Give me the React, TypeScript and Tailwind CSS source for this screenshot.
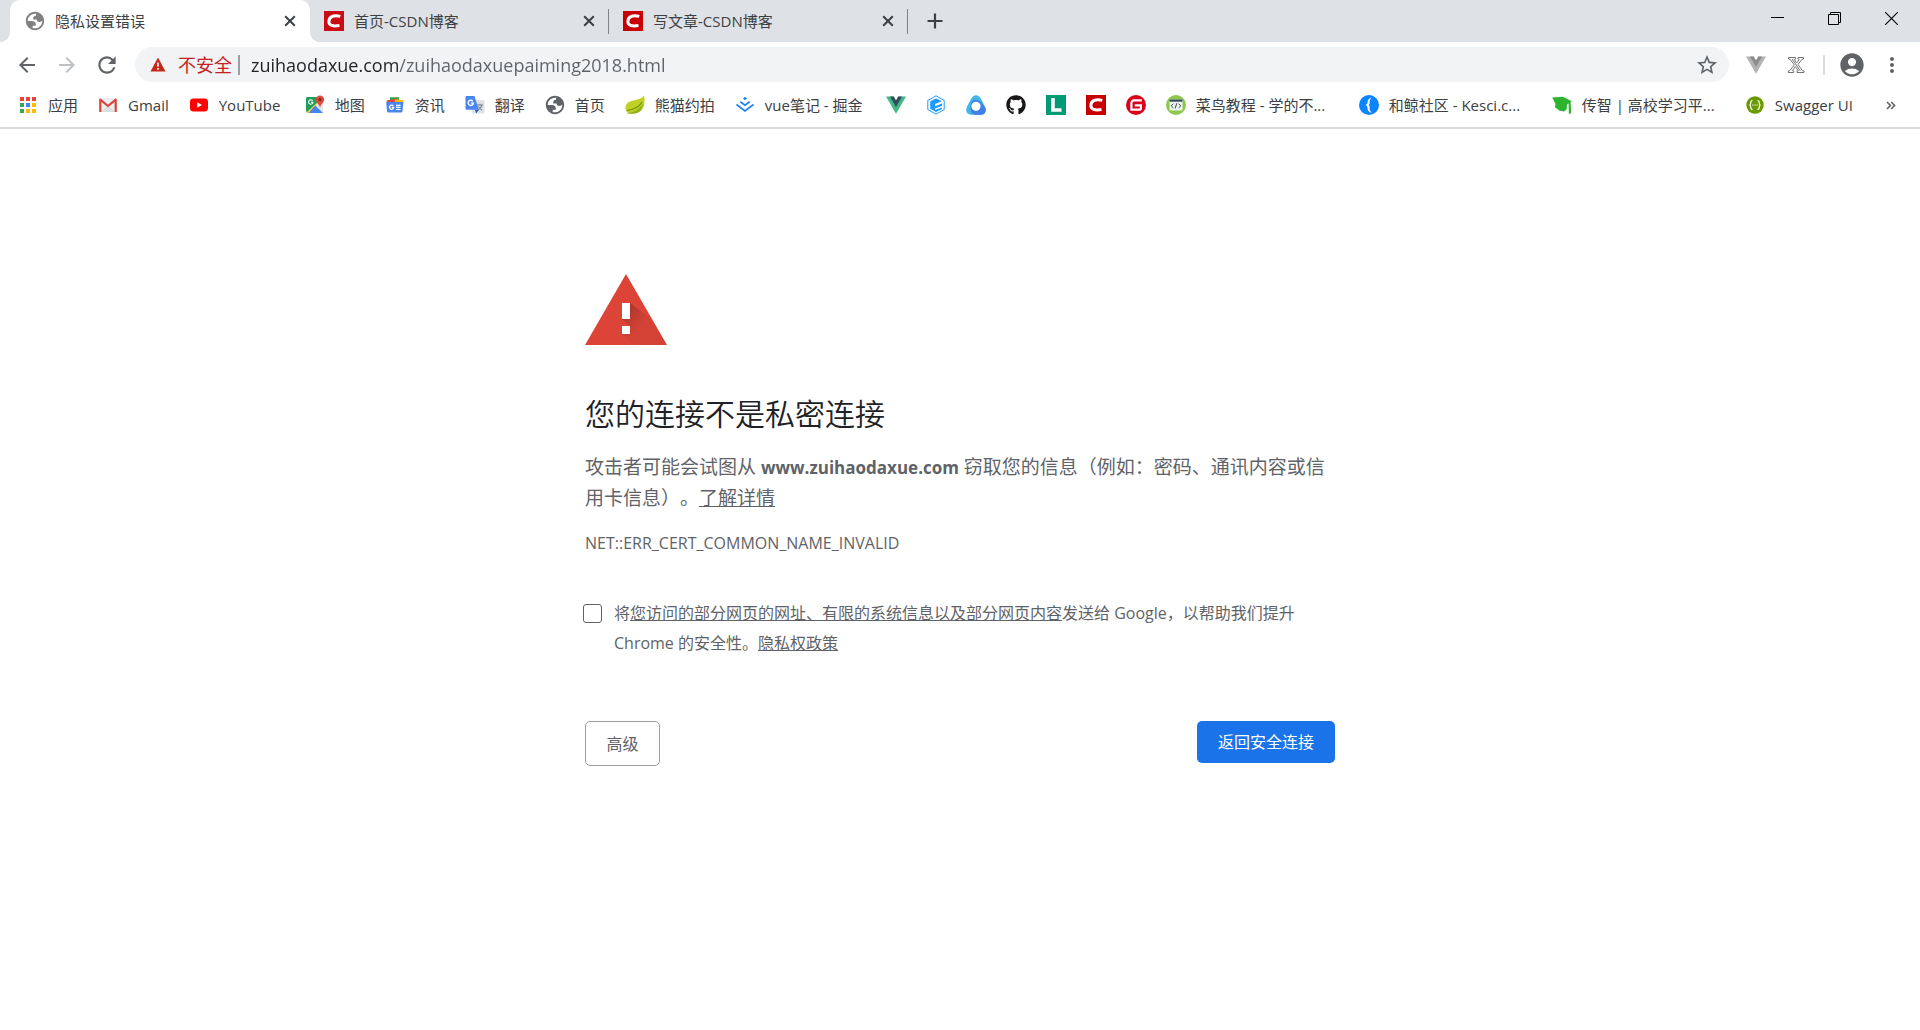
import type { ReactNode } from "react";
import { FaGithub } from "react-icons/fa";
import {
  MdAccountCircle,
  MdArrowBack,
  MdArrowForward,
  MdMoreVert,
  MdRefresh,
  MdStarBorder,
} from "react-icons/md";

const svgProps = { width: 20, height: 20, viewBox: "0 0 20 20", "aria-hidden": true } as const;

function GlobeIcon({ className }: { className: string }) {
  return (
    <svg viewBox="0 0 24 24" fill="currentColor" fillRule="evenodd" aria-hidden className={className}>
      <path d="M12 2C6.480 2 2 6.480 2 12s4.480 10 10 10 10-4.480 10-10S17.520 2 12 2zM4 12h4.400c3.407.022 4.922 1.730 4.543 5.127H9.488v2.470a8.004 8.004 0 0 0 10.498-8.083C19.327 12.504 18.332 13 17 13c-2.137 0-3.206-.916-3.206-2.750h-3.748c-.274-2.728.683-4.092 2.870-4.092 0-.975.327-1.597.811-1.970A8 8 0 0 0 4 12z" />
    </svg>
  );
}

function CsdnIcon({ fill }: { fill: string }) {
  return (
    <svg {...svgProps}>
      <rect width="20" height="20" fill={fill} />
      <path d="M16.3 5.400C10.500 3.900 5.400 5 4.900 10c-.4 4.600 4 5.600 10.600 4.600" fill="none" stroke="#fff" strokeWidth="3" />
    </svg>
  );
}

function AppsIcon() {
  const colors = ["#ea4335", "#ea4335", "#ea4335", "#34a853", "#4285f4", "#fbbc05", "#34a853", "#fbbc05", "#fbbc05"];
  return (
    <svg {...svgProps}>
      {colors.map((c, i) => (
        <rect key={i} x={2 + (i % 3) * 6} y={2 + Math.floor(i / 3) * 6} width="4" height="4" fill={c} />
      ))}
    </svg>
  );
}

function GmailIcon() {
  return (
    <svg {...svgProps}>
      <rect x="1" y="3" width="18" height="14" rx="1.200" fill="#eceff1" />
      <path d="M3 17 10 10.500 17 17z" fill="#dcdfe1" />
      <path d="M2.300 17V4.600L10 11l7.700-6.400V17" fill="none" stroke="#d9453a" strokeWidth="2.200" strokeLinejoin="round" />
    </svg>
  );
}

function YouTubeIcon() {
  return (
    <svg {...svgProps}>
      <rect x="1" y="3.500" width="18" height="13" rx="3.400" fill="#f00" />
      <path d="M8.200 7.200v5.600l4.900-2.800z" fill="#fff" />
    </svg>
  );
}

function MapsIcon() {
  return (
    <svg {...svgProps}>
      <rect x="1" y="2" width="17" height="16" rx="1.500" fill="#e8eaed" />
      <path d="M1 3.500C1 2.700 1.700 2 2.500 2H12v7L2.400 17.600 1 16z" fill="#1e9e58" />
      <path d="M1.600 17.300 17 3l1 1.400L3.600 18H2.200z" fill="#fdc935" />
      <path d="M10.200 10.500 18 18H3.600z" fill="#4285f4" />
      <path d="m10.800 9.800 7.200 6.900v-9L14 6.800z" fill="#e4e6e8" />
      <path d="M7.600 5.700a2.200 2.200 0 1 0 .4 1.500H6" fill="none" stroke="#fff" strokeWidth="1.100" />
      <path d="M15 .4a4.200 4.200 0 0 0-4.200 4.200c0 3.100 3.100 4 4.200 8.200 1.100-4.200 4.200-5.100 4.200-8.200A4.200 4.200 0 0 0 15 .4" fill="#e14a3b" />
      <circle cx="15" cy="4.600" r="1.500" fill="#7b231c" />
    </svg>
  );
}

function NewsIcon() {
  return (
    <svg {...svgProps}>
      <path d="M5 2.200h9v6H5z" fill="#2fa84f" />
      <path d="m1.500 5.500 11-2 1 5-11 2z" fill="#ea4335" />
      <path d="M10 4.500 18.500 5l-.6 6H10z" fill="#fbbc04" />
      <path d="M1.200 7h17.200l-.9 9.200a1.500 1.500 0 0 1-1.500 1.300H3.500A1.500 1.500 0 0 1 2 16.200z" fill="#4a86f0" />
      <path d="M8.300 10.900a2.100 2.100 0 1 0 .4 1.600H6.900" fill="none" stroke="#fff" strokeWidth="1.300" />
      <path d="M11 10.300h4.500M11 12.400h4.500M11 14.500h4.500" stroke="#fff" strokeWidth="1.200" />
    </svg>
  );
}

function TranslateIcon() {
  return (
    <svg {...svgProps}>
      <rect x="7" y="5" width="12.500" height="13.500" rx="1.200" fill="#dfe1e4" />
      <path d="M12 10h6M15 8.800V10M17 10c-.8 2.500-2.600 4.300-4 5.200M13.500 11.500c.8 1.600 2 2.700 3.500 3.600" fill="none" stroke="#73848e" strokeWidth="1.100" />
      <path d="M1.700 1H9.500l4.300 13.800H1.700A1.200 1.200 0 0 1 .5 13.600V2.200A1.200 1.200 0 0 1 1.700 1z" fill="#4a86f0" />
      <path d="M10 14.800h3.800L11.200 18.500z" fill="#2b59b8" />
      <path d="M7.800 6.300a2.600 2.600 0 1 0 .5 1.900H5.900" fill="none" stroke="#fff" strokeWidth="1.300" />
    </svg>
  );
}

function LeafIcon() {
  return (
    <svg {...svgProps}>
      <path d="M19 .6c1 5.400.9 11.400-2.700 14.900-3.600 3.400-9.300 3.200-13.300 2.200C.5 15.900-.3 12.300 1.500 9 5 4.200 14.500 6.600 19 .6z" fill="#c0d024" />
      <path d="M1.600 18.300c7-.7 13.200-3.500 16.100-9.700-.1 5.700-3.200 10-9.700 10.200-2.600.1-4.900-.1-6.400-.5z" fill="#8fb01a" />
      <path d="M1.800 15.500c6.700-.6 11.800-2.900 15.300-8.500" fill="none" stroke="#6d9311" strokeWidth="1.200" />
    </svg>
  );
}

function JuejinIcon() {
  return (
    <svg {...svgProps} fill="none" stroke="#1e80ff" strokeWidth="1.700">
      <path d="m10 1.800 2 1.700-2 1.700-2-1.700z" fill="#1e80ff" stroke="none" />
      <path d="M5.300 6.800 10 10.300l4.700-3.500M1.500 9.500 10 15.900l8.500-6.400" />
    </svg>
  );
}

function VueIcon({ outer, inner }: { outer: string; inner: string }) {
  return (
    <svg {...svgProps}>
      <path d="M0 1.500h7.500L10 5.800l2.500-4.300H20L10 18.800z" fill={outer} />
      <path d="M4 1.500h3.700L10 5.500l2.300-4H16L10 12z" fill={inner} />
    </svg>
  );
}

function HexIcon() {
  return (
    <svg {...svgProps}>
      <path d="M10 .8 18.200 5.400v9.200L10 19.200 1.800 14.600V5.400z" fill="none" stroke="#1e9bff" />
      <path d="M10 3.200 15.800 6.200 9 9v2.200l7-2.700v2.200l-7 2.700V15l7-2.400v1.300L10 17l-5.800-3.200V6.400z" fill="#1e9bff" />
    </svg>
  );
}

function TriangleLogoIcon() {
  return (
    <svg {...svgProps}>
      <path d="M10 .3c2.500 0 4 1.700 5.300 4.200l3.700 7.200c2 4.300.2 8.100-3.800 8.100H4.800c-4 0-5.800-3.800-3.800-8.100l3.700-7.200C6 2 7.500.3 10 .3z" fill="#41b5e8" />
      <path d="M8 5c4.500-1 8.500 3.600 11.400 8 .9 3.900-.7 6.800-4.200 6.800H9C3.500 19 2.600 8 8 5z" fill="#3f7fe6" />
      <circle cx="10" cy="11.300" r="4.600" fill="#fff" />
    </svg>
  );
}

function GreenLIcon() {
  return (
    <svg {...svgProps}>
      <rect width="20" height="20" fill="#009a77" />
      <path d="M7 3v12h8.500" fill="none" stroke="#fff" strokeWidth="3.600" />
    </svg>
  );
}

function GiteeIcon() {
  return (
    <svg {...svgProps}>
      <circle cx="10" cy="10" r="10" fill="#d9001b" />
      <path d="M15.800 5.400H8A2.600 2.600 0 0 0 5.400 8v6.600h7.800a1.700 1.700 0 0 0 1.700-1.700v-2.500H8.700" fill="none" stroke="#fff" strokeWidth="2.200" />
    </svg>
  );
}

function RunoobIcon() {
  return (
    <svg {...svgProps}>
      <circle cx="10" cy="10" r="10" fill="#8cc84b" />
      <rect x="3.500" y="4.500" width="13" height="11" rx=".8" fill="#eef3ee" />
      <path d="M3.500 4.500h13v2.200h-13z" fill="#34495e" />
      <path d="M7.300 8.700 5.200 10.800l2.100 2.100M12.700 8.700l2.100 2.100-2.100 2.100M10.800 8.200l-1.600 5.200" fill="none" stroke="#34495e" strokeWidth="1" />
    </svg>
  );
}

function KesciIcon() {
  return (
    <svg {...svgProps}>
      <circle cx="10" cy="10" r="10" fill="#0a84ff" />
      <path d="M12.800 2.500C9 3.500 8.700 6 8.500 7.800 8.300 9 7.600 9.600 6.600 10c1 .5 1.700 1.200 1.800 2.400.2 2.200.6 4.400 4.400 5.400-2.200-2-2.300-3.600-2.200-5.200.1-1.200-.2-2-.9-2.600.8-.7 1.100-1.500 1-2.700-.1-1.600.1-3 2.100-4.800z" fill="#fff" />
    </svg>
  );
}

function GraduationIcon() {
  return (
    <svg {...svgProps}>
      <path d="M.2 2.600 11 1.800l8.800 4.500-1.200.8.200 3.400.4 7.700-2.300.8-.3-8.400.1-2-1.700.6-.3 5-2.600 2.300-4.500-.8-4.600-3.500.4-3.500z" fill="#2db52d" />
    </svg>
  );
}

function SwaggerIcon() {
  return (
    <svg {...svgProps}>
      <circle cx="10" cy="10" r="8.700" fill="#6b9a00" />
      <path d="M7.500 5.500c-3 0-.6 4-3 4.500 2.400.5 0 4.500 3 4.500M12.500 5.500c3 0 .6 4 3 4.500-2.400.5 0 4.500-3 4.500" fill="none" stroke="#fff" strokeWidth="1.200" />
      <path d="M7.200 9.400h1.200v1.200H7.200zM9.400 9.400h1.200v1.200H9.400zM11.600 9.400h1.200v1.200h-1.200z" fill="#fff" />
    </svg>
  );
}

function CloseIcon() {
  return (
    <svg width="12" height="12" viewBox="0 0 12 12" aria-hidden>
      <path d="M1.200 1.200 10.800 10.800M10.800 1.200 1.200 10.800" stroke="currentColor" strokeWidth="2" />
    </svg>
  );
}

function Tab({ icon, title, active, divider }: { icon: ReactNode; title: string; active?: boolean; divider?: boolean }) {
  return (
    <div
      className={
        active
          ? "relative flex h-full w-[300px] min-w-0 items-center rounded-t-[10px] bg-white pr-3 pl-[15px] before:absolute before:bottom-0 before:-left-2.5 before:size-2.5 before:bg-[radial-gradient(circle_at_0_0,transparent_10px,#fff_10px)] after:absolute after:-right-2.5 after:bottom-0 after:size-2.5 after:bg-[radial-gradient(circle_at_100%_0,transparent_10px,#fff_10px)]"
          : "relative flex h-full w-[299px] min-w-0 items-center pr-3 pl-3.5"
      }
    >
      <button role="tab" aria-selected={!!active} className="flex min-w-0 flex-1 items-center gap-2.5 text-left">
        <span className="flex size-5 shrink-0 items-center justify-center">{icon}</span>
        <span className="truncate">{title}</span>
      </button>
      <button aria-label={`关闭 ${title}`} className="flex size-4 items-center justify-center text-[#3c4043]">
        <CloseIcon />
      </button>
      {divider && <span className="absolute right-0 h-[25px] w-px bg-[#808388]" />}
    </div>
  );
}

type Bookmark = { icon: ReactNode; label: string; text?: string; width?: string };

const bookmarks: Bookmark[] = [
  { icon: <AppsIcon />, label: "应用", text: "应用" },
  { icon: <GmailIcon />, label: "Gmail", text: "Gmail" },
  { icon: <YouTubeIcon />, label: "YouTube", text: "YouTube", width: "min-w-[66px]" },
  { icon: <MapsIcon />, label: "地图", text: "地图" },
  { icon: <NewsIcon />, label: "资讯", text: "资讯" },
  { icon: <TranslateIcon />, label: "翻译", text: "翻译" },
  { icon: <GlobeIcon className="size-[22px] shrink-0 text-[#5f6368]" />, label: "首页", text: "首页" },
  { icon: <LeafIcon />, label: "熊猫约拍", text: "熊猫约拍" },
  { icon: <JuejinIcon />, label: "vue笔记 - 掘金", text: "vue笔记 - 掘金", width: "min-w-[101px]" },
  { icon: <VueIcon outer="#41b883" inner="#35495e" />, label: "Vue" },
  { icon: <HexIcon />, label: "Element" },
  { icon: <TriangleLogoIcon />, label: "Ant" },
  { icon: <FaGithub className="size-5 text-[#191717]" />, label: "GitHub" },
  { icon: <GreenLIcon />, label: "L" },
  { icon: <CsdnIcon fill="#c80000" />, label: "CSDN" },
  { icon: <GiteeIcon />, label: "Gitee" },
  { icon: <RunoobIcon />, label: "菜鸟教程", text: "菜鸟教程 - 学的不...", width: "w-[143px]" },
  { icon: <KesciIcon />, label: "和鲸社区", text: "和鲸社区 - Kesci.c...", width: "w-[143px]" },
  { icon: <GraduationIcon />, label: "传智", text: "传智 | 高校学习平...", width: "w-[143px]" },
  { icon: <SwaggerIcon />, label: "Swagger UI", text: "Swagger UI" },
];

function WarningTriangle() {
  return (
    <svg width="82" height="71" viewBox="0 0 82 71" aria-hidden>
      <defs>
        <linearGradient id="shade" gradientUnits="userSpaceOnUse" x1="38" y1="40" x2="60" y2="60">
          <stop offset="0" stopColor="#000" stopOpacity=".2" />
          <stop offset=".7" stopColor="#000" stopOpacity=".03" />
        </linearGradient>
      </defs>
      <path d="M41 0 82 71H0z" fill="#db4437" />
      <path d="M45 29 67.500 45.900 82 71H48L37 60l8-8-8-7z" fill="url(#shade)" />
      <path d="M37 29h8v16h-8zM37 52h8v8h-8z" fill="#fff" />
    </svg>
  );
}

export default function App() {
  return (
    <div className="flex min-h-screen flex-col bg-white font-['Open_Sans','Noto_Sans_CJK_SC',sans-serif] text-[15px] text-[#3c4043] [text-spacing-trim:space-all]">
      <header>
        <div className="flex h-[42px] bg-[#dee1e6] pl-2.5">
          <div role="tablist" className="flex min-w-0">
            <Tab active icon={<GlobeIcon className="size-[22px] shrink-0 text-[#808080]" />} title="隐私设置错误" />
            <Tab divider icon={<CsdnIcon fill="#ca0c16" />} title="首页-CSDN博客" />
            <Tab divider icon={<CsdnIcon fill="#c80000" />} title="写文章-CSDN博客" />
          </div>
          <button aria-label="新标签页" className="flex w-[54px] items-center justify-center">
            <svg width="16" height="16" viewBox="0 0 16 16" aria-hidden>
              <path d="M8 .5v15M.5 8h15" stroke="#3c4043" strokeWidth="2.200" />
            </svg>
          </button>
          <div className="ml-auto flex h-9 text-black">
            <button aria-label="最小化" className="flex w-[57px] items-center justify-center">
              <svg width="13" height="13" viewBox="0 0 13 13" aria-hidden>
                <path d="M0 5.500h13" stroke="currentColor" />
              </svg>
            </button>
            <button aria-label="还原" className="flex w-[57px] items-center justify-center">
              <svg width="13" height="13" viewBox="0 0 13 13" aria-hidden fill="none" stroke="currentColor">
                <path d="M.5 2.500h10v10H.5zM2.500 2.500v-2h10v10h-2" />
              </svg>
            </button>
            <button aria-label="关闭" className="flex w-[57px] items-center justify-center">
              <svg width="13" height="13" viewBox="0 0 13 13" aria-hidden>
                <path d="m0 0 13 13M13 0 0 13" stroke="currentColor" strokeWidth="1.100" />
              </svg>
            </button>
          </div>
        </div>

        <div className="flex h-[45px] items-center pr-2 pl-[7px] text-[#5f6368]">
          <button aria-label="后退" className="flex w-10 justify-center">
            <MdArrowBack className="size-6" />
          </button>
          <button aria-label="前进" className="flex w-10 justify-center text-[#bdc1c6]">
            <MdArrowForward className="size-6" />
          </button>
          <button aria-label="重新加载" className="flex w-10 justify-center">
            <MdRefresh className="size-[26px]" />
          </button>
          <div className="mr-[7px] ml-2 flex h-[35px] min-w-0 flex-1 items-center rounded-full bg-[#f1f3f4] pr-2.5 pl-[15px] text-lg">
            <button className="flex shrink-0 items-center gap-3 text-[#c5221f]">
              <svg width="16" height="15" viewBox="0 0 16 15" aria-hidden>
                <path d="M8 .5 15.500 14.500H.5z" fill="#c5281c" />
                <path d="M8 5.500v4M8 11v1.700" stroke="#f1f3f4" strokeWidth="1.700" />
              </svg>
              <span>不安全</span>
            </button>
            <span className="mr-[11px] ml-1.5 h-5 w-0.5 shrink-0 bg-[#9aa0a6]" />
            <input
              aria-label="地址栏"
              defaultValue="zuihaodaxue.com/zuihaodaxuepaiming2018.html"
              className="h-full min-w-0 flex-1 bg-[linear-gradient(to_right,#202124_147px,#5f6368_147px)] bg-clip-text text-transparent outline-none"
            />
            <button aria-label="将此标签页加入书签">
              <MdStarBorder className="size-6" />
            </button>
          </div>
          <button aria-label="Vue devtools" className="flex w-10 justify-center">
            <VueIcon outer="#b3b3b3" inner="#8c8c8c" />
          </button>
          <button aria-label="XPath Helper" className="flex w-10 justify-center">
            <svg width="18" height="18" viewBox="0 0 18 18" fill="none" stroke="#757575" aria-hidden>
              <path d="M1.500 1.500h7v1.500l-1.300.3L9.700 7l2.500-3.500-1.200-.5V1.500h5.500V3l-1.600.4-3.900 5.100 4.500 6.300 1.500.2v1.500h-7V15l1.300-.3-3-4.100-2.900 4 1.300.4v1.500h-5.500V15l1.700-.4 4.400-5.700L3.100 3.300 1.500 3zM5.200 3l8 11.800" />
            </svg>
          </button>
          <span className="mx-[7px] h-5 w-0.5 bg-[#dadce0]" />
          <button aria-label="用户" className="flex w-10 justify-center">
            <MdAccountCircle className="size-7" />
          </button>
          <button aria-label="菜单" className="flex w-10 justify-center">
            <MdMoreVert className="size-6" />
          </button>
        </div>

        <nav aria-label="书签" className="flex h-[42px] items-center gap-5 overflow-hidden border-b-2 border-[#dadce0] pr-6 pb-1 pl-[18px]">
          {bookmarks.map((b) => (
            <a key={b.label} href="#" aria-label={b.label} className="flex shrink-0 items-center gap-2.5 whitespace-nowrap">
              <span className="flex size-5 items-center justify-center">{b.icon}</span>
              {b.text && <span className={b.width}>{b.text}</span>}
            </a>
          ))}
          <button aria-label="更多书签" className="ml-auto text-[#5f6368]">
            <svg width="10" height="9" viewBox="0 0 10 9" fill="none" stroke="currentColor" strokeWidth="1.600" aria-hidden>
              <path d="m1 1 3.400 3.500L1 8M5.200 1l3.400 3.500L5.200 8" />
            </svg>
          </button>
        </nav>
      </header>

      <main className="mx-auto w-full max-w-[750px] pt-[145px] text-base text-[#5f6368]">
        <WarningTriangle />
        <h1 className="mt-[51px] text-[30px] leading-9 font-[350] text-[#202124]">您的连接不是私密连接</h1>
        <p className="mt-5 text-[19px] leading-[30px]">
          攻击者可能会试图从 <strong className="text-[17px] font-bold">www.zuihaodaxue.com</strong> 窃取您的信息（例如：密码、通讯内容或信
          <br />
          用卡信息）。
          <a href="#" className="underline">了解详情</a>
        </p>
        <p className="mt-[18px] leading-6">NET::ERR_CERT_COMMON_NAME_INVALID</p>
        <div className="mt-[43px] -ml-0.5 flex gap-3">
          <input
            id="report"
            type="checkbox"
            className="mt-1.5 size-[19px] shrink-0 appearance-none rounded-[3px] border border-[#5f6368] bg-white checked:bg-[#1a73e8]"
          />
          <label htmlFor="report" className="leading-[30px]">
            将<a href="#" className="underline">您访问的部分网页的网址、有限的系统信息以及部分网页内容</a>发送给 Google，以帮助我们提升
            <br />
            Chrome 的安全性。<a href="#" className="underline">隐私权政策</a>
          </label>
        </div>
        <div className="mt-[63px] flex items-start justify-between">
          <button className="h-[45px] w-[75px] rounded-[5px] border border-[#9aa0a6]">高级</button>
          <button className="h-[42px] w-[138px] rounded-[5px] bg-[#1a73e8] text-white">返回安全连接</button>
        </div>
      </main>
    </div>
  );
}
